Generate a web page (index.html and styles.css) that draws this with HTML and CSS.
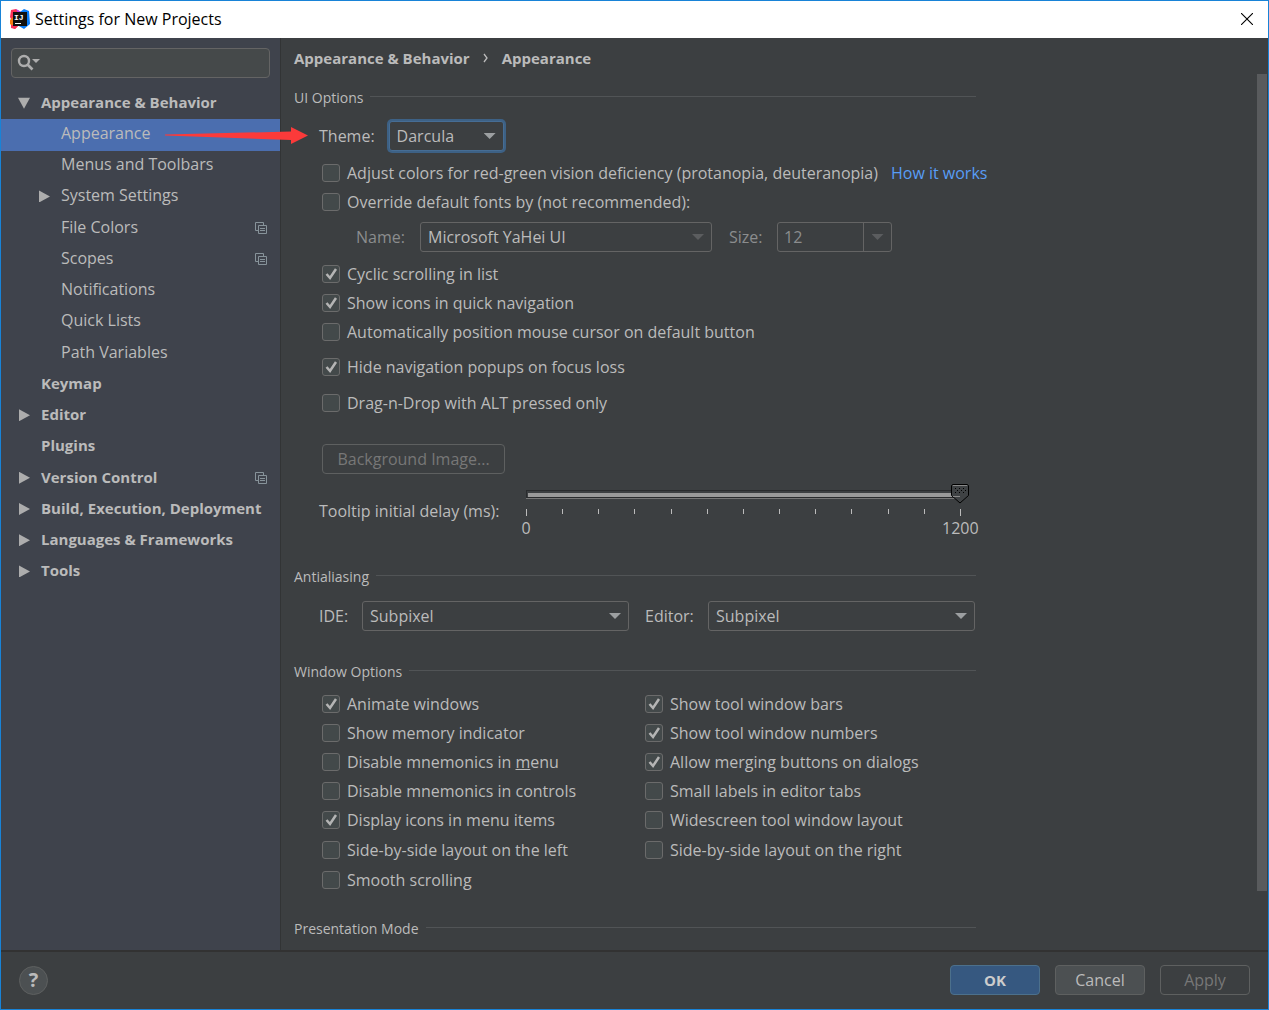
FILE: index.html
```html
<!DOCTYPE html>
<html lang="en">
<head>
<meta charset="utf-8">
<title>Settings for New Projects</title>
<link rel="stylesheet" href="styles.css">
</head>
<body>
<div class="window">
  <header class="titlebar">
    <svg class="logo" width="20" height="20" viewBox="0 0 20 20" aria-hidden="true">
      <path fill="#fc3158" d="M1 1l5-1 5 3-2 13-4 4-4-2 1-6-2-4z"/>
      <path fill="#f97a12" d="M0 11l3-3 4 8-3 2-4-3z"/>
      <path fill="#fc3158" d="M1 16h8l-4 4-4-1z"/>
      <path fill="#087cfa" d="M10 3l4-3 5 2 1 13-6 5-5-3z"/>
      <path fill="#b74af7" d="M6 0l5 3-3 1z"/>
      <path fill="#111" d="M3 3h14v14H3z"/>
      <text class="logo-text" x="4" y="11">IJ</text>
      <path fill="#fff" d="M5 14h6v1H5z"/>
    </svg>
    <h1 class="title">Settings for New Projects</h1>
    <button class="close" aria-label="Close"><svg width="12" height="12" viewBox="0 0 12 12"><path d="M0 0l12 12M12 0L0 12" stroke="#000" stroke-width="1.1"/></svg></button>
  </header>

  <div class="body">
    <nav class="sidebar" aria-label="Settings">
      <div class="search">
        <svg width="24" height="18" viewBox="0 0 24 18" aria-hidden="true"><circle cx="7" cy="7" r="5" fill="none" stroke="#adadad" stroke-width="2.400"/><path d="M10.500 10.500l5 5" stroke="#adadad" stroke-width="2.600"/><path d="M15 5h8l-4 4z" fill="#adadad"/></svg>
        <input type="search" class="search-input" aria-label="Search settings">
      </div>
      <ul class="tree">
        <li class="node top"><span class="arrow open"></span><a href="#">Appearance &amp; Behavior</a></li>
        <li class="node selected"><span class="arrow"></span><a href="#">Appearance</a>
          <svg class="pointer" width="143" height="18" viewBox="0 0 143 18" aria-hidden="true"><path fill="#fb3a3a" d="M0 7.500L126 4.500V0l17 8.500-17 8.500v-4L0 8.500z"/></svg>
        </li>
        <li class="node"><span class="arrow"></span><a href="#">Menus and Toolbars</a></li>
        <li class="node"><span class="arrow closed"></span><a href="#">System Settings</a></li>
        <li class="node"><span class="arrow"></span><a href="#">File Colors</a><svg class="project" width="12" height="12" viewBox="0 0 12 12"><path d="M3 8.500H.5v-8h8V3M3.500 3.500h8v8h-8zM5 6.500h5M5 8.500h5" fill="none" stroke="#87939a"/></svg></li>
        <li class="node"><span class="arrow"></span><a href="#">Scopes</a><svg class="project" width="12" height="12" viewBox="0 0 12 12"><path d="M3 8.500H.5v-8h8V3M3.500 3.500h8v8h-8zM5 6.500h5M5 8.500h5" fill="none" stroke="#87939a"/></svg></li>
        <li class="node"><span class="arrow"></span><a href="#">Notifications</a></li>
        <li class="node"><span class="arrow"></span><a href="#">Quick Lists</a></li>
        <li class="node"><span class="arrow"></span><a href="#">Path Variables</a></li>
        <li class="node top"><span class="arrow"></span><a href="#">Keymap</a></li>
        <li class="node top"><span class="arrow closed"></span><a href="#">Editor</a></li>
        <li class="node top"><span class="arrow"></span><a href="#">Plugins</a></li>
        <li class="node top"><span class="arrow closed"></span><a href="#">Version Control</a><svg class="project" width="12" height="12" viewBox="0 0 12 12"><path d="M3 8.500H.5v-8h8V3M3.500 3.500h8v8h-8zM5 6.500h5M5 8.500h5" fill="none" stroke="#87939a"/></svg></li>
        <li class="node top"><span class="arrow closed"></span><a href="#">Build, Execution, Deployment</a></li>
        <li class="node top"><span class="arrow closed"></span><a href="#">Languages &amp; Frameworks</a></li>
        <li class="node top"><span class="arrow closed"></span><a href="#">Tools</a></li>
      </ul>
    </nav>

    <main class="main">
      <div class="content">
        <div class="breadcrumb"><span>Appearance &amp; Behavior</span><svg width="6" height="10" viewBox="0 0 6 10" aria-hidden="true"><path d="M1 1l3 4-3 4" fill="none" stroke="#bbb" stroke-width="1.300"/></svg><span>Appearance</span></div>

        <h2 class="heading">UI Options</h2>
        <div class="row theme-row">
          <label for="theme">Theme:</label>
          <span class="combo focused theme"><select id="theme"><option>Darcula</option></select></span>
        </div>
        <div class="checks">
          <div class="check-line"><label class="check"><input type="checkbox">Adjust colors for red-green vision deficiency (protanopia, deuteranopia)</label><a class="link" href="#">How it works</a></div>
          <label class="check"><input type="checkbox">Override default fonts by (not recommended):</label>
        </div>
        <div class="row font-row">
          <label class="name-label" for="font-name">Name:</label>
          <span class="combo disabled font-name"><select id="font-name" disabled><option>Microsoft YaHei UI</option></select></span>
          <label class="size-label" for="font-size">Size:</label>
          <span class="spin"><input id="font-size" type="text" value="12" disabled><button aria-label="Choose size" disabled></button></span>
        </div>
        <div class="checks">
          <label class="check"><input type="checkbox" checked>Cyclic scrolling in list</label>
          <label class="check"><input type="checkbox" checked>Show icons in quick navigation</label>
          <label class="check"><input type="checkbox">Automatically position mouse cursor on default button</label>
        </div>
        <div class="checks spaced">
          <label class="check"><input type="checkbox" checked>Hide navigation popups on focus loss</label>
          <label class="check"><input type="checkbox">Drag-n-Drop with ALT pressed only</label>
        </div>
        <button class="button background" disabled>Background Image...</button>

        <div class="row delay-row">
          <label for="delay">Tooltip initial delay (ms):</label>
          <div class="slider">
            <input id="delay" type="range" min="0" max="1200" value="1200" step="100">
            <div class="ticks"><i></i><i></i><i></i><i></i><i></i><i></i><i></i><i></i><i></i><i></i><i></i><i></i><i></i></div>
            <div class="scale"><span>0</span><span>1200</span></div>
          </div>
        </div>

        <h2 class="heading">Antialiasing</h2>
        <div class="row alias-row">
          <label class="ide-label" for="aa-ide">IDE:</label>
          <span class="combo alias"><select id="aa-ide"><option>Subpixel</option></select></span>
          <label class="editor-label" for="aa-editor">Editor:</label>
          <span class="combo alias"><select id="aa-editor"><option>Subpixel</option></select></span>
        </div>

        <h2 class="heading">Window Options</h2>
        <div class="options">
          <label class="check"><input type="checkbox" checked>Animate windows</label>
          <label class="check"><input type="checkbox" checked>Show tool window bars</label>
          <label class="check"><input type="checkbox">Show memory indicator</label>
          <label class="check"><input type="checkbox" checked>Show tool window numbers</label>
          <label class="check"><input type="checkbox"><span>Disable mnemonics in <u>m</u>enu</span></label>
          <label class="check"><input type="checkbox" checked>Allow merging buttons on dialogs</label>
          <label class="check"><input type="checkbox">Disable mnemonics in controls</label>
          <label class="check"><input type="checkbox">Small labels in editor tabs</label>
          <label class="check"><input type="checkbox" checked>Display icons in menu items</label>
          <label class="check"><input type="checkbox">Widescreen tool window layout</label>
          <label class="check"><input type="checkbox">Side-by-side layout on the left</label>
          <label class="check"><input type="checkbox">Side-by-side layout on the right</label>
          <label class="check"><input type="checkbox">Smooth scrolling</label>
        </div>

        <h2 class="heading">Presentation Mode</h2>
      </div>
      <div class="scrollbar"></div>
    </main>
  </div>

  <footer class="footer">
    <button class="help" aria-label="Help">?</button>
    <button class="button primary">OK</button>
    <button class="button">Cancel</button>
    <button class="button" disabled>Apply</button>
  </footer>
</div>
</body>
</html>
```
FILE: styles.css
```css
* { box-sizing: border-box; }

body {
  margin: 0;
  background: #3c3f41;
  color: #bbb;
  font: 16px/20px "Open Sans", "Noto Sans", sans-serif;
}

button, input, select { font: inherit; color: inherit; margin: 0; }
a { color: inherit; text-decoration: none; }

.window {
  display: flex;
  flex-direction: column;
  min-height: 100vh;
  border: 1px solid #1883d7;
}

/* Title bar */
.titlebar {
  display: flex;
  align-items: center;
  height: 37px;
  padding: 0 15px 2px 9px;
  background: #fff;
  color: #000;
}
.logo-text { font: bold 8px "Liberation Mono", monospace; fill: #fff; }
.title { flex: 1; margin: 0 0 0 5px; font-size: 16px; font-weight: 400; }
.close { display: flex; padding: 0; border: 0; background: none; }

.body { display: flex; flex: 1; }

/* Sidebar */
.sidebar {
  flex: none;
  width: 280px;
  padding-top: 10px;
  background: #3f434c;
  border-right: 1px solid #323435;
}
.search {
  display: flex;
  align-items: center;
  height: 30px;
  margin: 0 10px;
  padding: 0 5px;
  background: #45494a;
  border: 1px solid #646464;
  border-radius: 4px;
}
.search svg { flex: none; }
.search-input { flex: 1; min-width: 0; border: 0; outline: 0; background: none; }

.tree {
  display: grid;
  grid-auto-rows: 1fr;
  height: 500px;
  margin: 10px 0 0;
  padding: 0;
  list-style: none;
}
.node {
  position: relative;
  display: flex;
  align-items: center;
  padding: 0 13px 2px 37px;
  white-space: nowrap;
}
.node a { padding-bottom: 2px; }
.node.top { padding-left: 17px; font-size: 15px; font-weight: 700; }
.node.selected { background: #4b6eaf; }
.arrow { flex: none; width: 23px; height: 12px; }
.arrow::before { content: ""; display: block; width: 12px; height: 12px; }
.arrow.open::before { background: #adadad; clip-path: polygon(0 1px, 12px 1px, 6px 12px); }
.arrow.closed::before { background: #adadad; clip-path: polygon(1px 0, 12px 6px, 1px 12px); }
.project { margin-left: auto; }
.pointer { position: absolute; left: 164px; top: 8px; z-index: 1; }

/* Content */
.main { position: relative; flex: 1; min-width: 0; padding-left: 13px; }
.content { max-width: 682px; }
.breadcrumb {
  display: flex;
  align-items: center;
  gap: 13px;
  height: 39px;
  margin-bottom: 4px;
  font-size: 15px;
  font-weight: 700;
}
.heading {
  display: flex;
  align-items: center;
  gap: 7px;
  height: 34px;
  margin: 0;
  font-size: 14px;
  font-weight: 400;
}
.heading::after { content: ""; flex: 1; height: 1px; margin-bottom: 4px; background: #515456; }

.row { display: flex; align-items: center; height: 30px; padding-left: 25px; white-space: nowrap; }
.theme-row { gap: 14px; margin: 6px 0 7px; }

.combo { position: relative; display: flex; height: 30px; }
.combo select {
  appearance: none;
  width: 100%;
  padding: 0 24px 0 7px;
  background: #3c3f41;
  border: 1px solid #646464;
  border-radius: 3px;
  outline: 0;
  opacity: 1;
}
.combo::after, .spin button::after {
  content: "";
  width: 12px;
  height: 6px;
  background: #9c9fa1;
  clip-path: polygon(0 0, 100% 0, 50% 100%);
}
.combo::after { position: absolute; right: 8px; top: 12px; pointer-events: none; }
.combo.disabled::after, .spin button::after { background: #5b5d5f; }
.combo.focused select { border-color: #466d94; box-shadow: 0 0 0 2px #3d6185; }
.theme { width: 115px; }
.alias { width: 267px; }
.font-name { width: 292px; }

.font-row { margin: 6px 0 7px; padding-left: 62px; color: #8b8d8e; }
.font-name select { color: #bbb; }
.name-label { width: 64px; }
.size-label { width: 48px; margin-left: 17px; }
.spin { display: flex; width: 115px; height: 30px; border: 1px solid #646464; border-radius: 3px; }
.spin input { flex: 1; min-width: 0; padding: 0 6px; background: none; border: 0; }
.spin button {
  display: flex;
  align-items: center;
  justify-content: center;
  width: 28px;
  padding: 0;
  background: none;
  border: 0;
  border-left: 1px solid #646464;
}

.checks { display: flex; flex-direction: column; padding-left: 28px; }
.checks.spaced { gap: 7px; margin-top: 6px; }
.check-line { display: flex; gap: 13px; align-items: center; white-space: nowrap; }
.check { display: flex; align-items: center; gap: 7px; height: 29px; white-space: nowrap; }
.check input {
  appearance: none;
  flex: none;
  width: 18px;
  height: 18px;
  background: #43494a;
  border: 1px solid #6b6b6b;
  border-radius: 3px;
}
.check input:checked {
  background: #43494a url("data:image/svg+xml,%3Csvg xmlns='http://www.w3.org/2000/svg' viewBox='0 0 16 16'%3E%3Cpath d='M3.500 8l3.500 4 6-9' fill='none' stroke='%23b4b4b4' stroke-width='2.500'/%3E%3C/svg%3E") center / 16px 16px no-repeat;
}
.link { color: #589df6; }

.button {
  width: 90px;
  height: 30px;
  padding: 0;
  color: #bbb;
  background: #4c5052;
  border: 1px solid #5e6060;
  border-radius: 4px;
}
.button:disabled { color: #777; background: none; }
.button.primary { color: #ccc; font-size: 15px; font-weight: 700; background: #365880; border-color: #4c708c; }
.background { display: block; width: 183px; margin: 27px 0 0 28px; }

/* Slider */
.delay-row { align-items: flex-start; height: 74px; margin: 10px 0 2px; }
.delay-row > label { flex: none; width: 189px; padding-top: 17px; }
.slider { flex: none; width: 470px; }
.slider input {
  appearance: none;
  display: block;
  width: 452px;
  height: 20px;
  margin-left: 9px;
  background:
    linear-gradient(#999, #999) 11px 9px / 432px 4px no-repeat,
    linear-gradient(#292b2d, #292b2d) 9px 6px / 434px 1px no-repeat,
    linear-gradient(#292b2d, #292b2d) 9px 6px / 1px 8px no-repeat,
    linear-gradient(#292b2d, #292b2d) 9px 13px / 434px 1px no-repeat,
    linear-gradient(#777, #777) 9px 14px / 434px 1px no-repeat;
  outline: 0;
}
.slider input::-webkit-slider-thumb {
  appearance: none;
  width: 18px;
  height: 20px;
  background: url("data:image/svg+xml,%3Csvg xmlns='http://www.w3.org/2000/svg' viewBox='0 0 18 20'%3E%3Cpath d='M.5 1.500l1-1h15l1 1v10L9 19 .5 11.500z' fill='%233f4244' stroke='%23000'/%3E%3Cpath d='M2 1.500h14M2 12.500h7' stroke='%23888'/%3E%3Cpath d='M4 4.500h10M6 6.500h10M4 8.500h10' stroke='%23000' stroke-dasharray='1 3'/%3E%3C/svg%3E") no-repeat;
}
.ticks { display: flex; justify-content: space-between; height: 7px; margin: 5px 17px 0 18px; }
.ticks i { width: 1px; height: 5px; background: #bbb; }
.ticks i:first-child, .ticks i:last-child { height: 7px; }
.scale { display: flex; justify-content: space-between; margin-top: 2px; }
.scale span { width: 36px; text-align: center; }

.alias-row { margin: 7px 0 24px; }
.ide-label { width: 43px; }
.editor-label { width: 63px; margin-left: 16px; }

.options {
  display: grid;
  grid-template-columns: 323px 1fr;
  grid-template-rows: repeat(4, 29px);
  grid-auto-rows: 30px;
  margin-bottom: 17px;
  padding-left: 28px;
}

.scrollbar { position: absolute; top: 36px; right: 1px; bottom: 59px; width: 10px; background: #595b5d; }

/* Footer */
.footer {
  display: flex;
  align-items: center;
  gap: 15px;
  height: 59px;
  padding: 0 18px 1px;
  border-top: 2px solid #323232;
}
.help {
  width: 29px;
  height: 29px;
  margin-right: auto;
  padding: 0;
  font-size: 20px;
  font-weight: 700;
  background: #4c5052;
  border: 1px solid #5e6060;
  border-radius: 50%;
}
```
